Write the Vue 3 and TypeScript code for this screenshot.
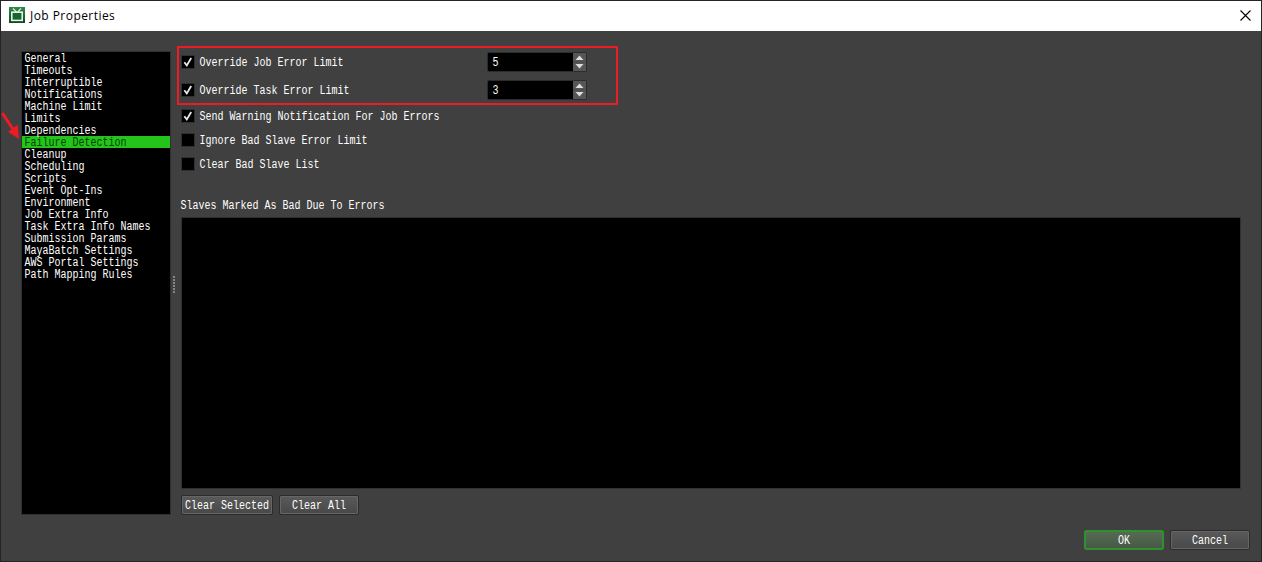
<script setup lang="ts">
import { ref } from 'vue'

const sections: string[] = [
  'General', 'Timeouts', 'Interruptible', 'Notifications', 'Machine Limit', 'Limits',
  'Dependencies', 'Failure Detection', 'Cleanup', 'Scheduling', 'Scripts', 'Event Opt-Ins',
  'Environment', 'Job Extra Info', 'Task Extra Info Names', 'Submission Params',
  'MayaBatch Settings', 'AWS Portal Settings', 'Path Mapping Rules',
]
const selected = ref('Failure Detection')

interface Limit { label: string; on: boolean; value: number }
const limits = ref<Limit[]>([
  { label: 'Override Job Error Limit', on: true, value: 5 },
  { label: 'Override Task Error Limit', on: true, value: 3 },
])
const options = ref([
  { label: 'Send Warning Notification For Job Errors', on: true },
  { label: 'Ignore Bad Slave Error Limit', on: false },
  { label: 'Clear Bad Slave List', on: false },
])
</script>

<template>
  <div class="window">
    <header class="titlebar">
      <svg class="logo" width="16" height="16" viewBox="0 0 16 16">
        <defs>
          <linearGradient id="tv" x1="0" y1="0" x2="0" y2="1">
            <stop offset="0" stop-color="#2f8a46" /><stop offset="1" stop-color="#0a4a20" />
          </linearGradient>
        </defs>
        <rect width="16" height="16" fill="url(#tv)" />
        <path d="M4 1.5 L7.5 5 M12 1.5 L8.5 5" stroke="#dcebdd" stroke-width="1.2" fill="none" />
        <rect x="2.8" y="5.2" width="10.4" height="8.2" fill="#17652f" stroke="#f2f8f2" stroke-width="1.5" />
      </svg>
      <span class="title">Job Properties</span>
      <svg class="close" width="11" height="11" viewBox="0 0 11 11">
        <path d="M0.5 0.5 L10.5 10.5 M10.5 0.5 L0.5 10.5" stroke="#000" stroke-width="1.1" />
      </svg>
    </header>

    <main class="body">
      <ul class="sections">
        <li v-for="s in sections" :key="s" :class="{ active: s === selected }" @click="selected = s">
          <span class="t">{{ s }}</span>
        </li>
      </ul>
      <div class="splitter"><i v-for="n in 6" :key="n" /></div>
      <section class="panel">
        <div v-for="l in limits" :key="l.label" class="limit">
          <span class="check" @click="l.on = !l.on">
            <svg v-if="l.on" width="12" height="12" viewBox="0 0 12 12"><path d="M2.3 6.2 L4.8 9.4 L9.2 2" /></svg>
          </span>
          <span class="t name">{{ l.label }}</span>
          <div class="spin">
            <span class="value"><span class="t">{{ l.value }}</span></span>
            <span class="steps">
              <svg width="13" height="18" viewBox="0 0 13 18">
                <path d="M2.5 7 L6.5 2.5 L10.5 7 Z M2.5 11 L6.5 15.5 L10.5 11 Z" fill="#dcdcdc" />
                <path d="M0 9 H13" stroke="#484848" />
              </svg>
            </span>
          </div>
        </div>
        <div v-for="o in options" :key="o.label" class="option">
          <span class="check" @click="o.on = !o.on">
            <svg v-if="o.on" width="12" height="12" viewBox="0 0 12 12"><path d="M2.3 6.2 L4.8 9.4 L9.2 2" /></svg>
          </span>
          <span class="t">{{ o.label }}</span>
        </div>
        <div class="caption"><span class="t">Slaves Marked As Bad Due To Errors</span></div>
        <div class="slaves" />
        <div class="actions">
          <button class="wide"><span class="t">Clear Selected</span></button>
          <button><span class="t">Clear All</span></button>
        </div>
      </section>
    </main>

    <footer class="footer">
      <button class="ok"><span class="t">OK</span></button>
      <button><span class="t">Cancel</span></button>
    </footer>

    <div class="highlight" />
    <svg class="arrow" width="22" height="30" viewBox="0 0 22 30">
      <path d="M1 2.8 L3.6 1.2 L13.8 16.6 L17.8 14 L19 28 L8 20.8 L11.4 18.6 Z" fill="#ed1c24" />
    </svg>
  </div>
</template>

<style>
body { margin: 0; background: #404040; }
</style>

<style scoped>
.window {
  position: relative; box-sizing: border-box; width: 1262px; height: 562px;
  display: flex; flex-direction: column; overflow: hidden;
  border: 1px solid #262427; background: #404040; color: #fff;
  font-family: "Liberation Mono", monospace; font-size: 10px;
}
.t {
  display: block; font-size: 10px; line-height: 12px; white-space: pre;
  transform: translate(0.5px, 2px) scaleY(1.2); transform-origin: 0 9px;
}
.titlebar {
  flex: none; height: 30px; display: flex; align-items: center; background: #fff; color: #000;
  padding: 0 10px 0 8px; box-sizing: border-box;
}
.logo { margin-top: -2px; }
.title { margin-left: 5px; font: 12px/16px "Open Sans", sans-serif; letter-spacing: 0.45px; }
.close { margin-left: auto; margin-top: -1px; }
.body { flex: none; box-sizing: border-box; height: 485px; display: flex; padding: 20px 20px 0; }
.sections {
  box-sizing: border-box; width: 150px; height: 464px; margin: 0; padding: 0; list-style: none;
  border: 1px solid #303030; background: #000;
}
.sections li { height: 12px; padding-left: 2px; }
.sections li.active { background: #24c51b; color: #063f04; }
.splitter {
  width: 10px; padding: 225px 5px 0 0; box-sizing: border-box;
  display: flex; flex-direction: column; align-items: center; gap: 1px;
}
.splitter i { width: 2px; height: 2px; background: #858585; }
.panel { width: 1060px; padding-top: 1px; display: flex; flex-direction: column; }
.limit { flex: none; height: 20px; margin-bottom: 8px; display: flex; align-items: center; }
.limit + .option { margin-top: -4px; }
.check {
  flex: none; box-sizing: border-box; width: 14px; height: 14px; margin-right: 4px;
  border: 1px solid #303030; background: #000;
}
.check svg { display: block; }
.check path { fill: none; stroke: #e8e8e8; stroke-width: 1.8; }
.name { width: 288px; }
.spin {
  box-sizing: border-box; width: 100px; height: 20px; display: flex;
  border: 1px solid #2c2c2c; border-radius: 2px; background: #000;
}
.value { width: 85px; padding: 3px 0 0 4px; box-sizing: border-box; }
.steps { width: 13px; background: #565656; }
.steps svg { display: block; }
.option { flex: none; height: 24px; display: flex; align-items: center; }
.caption { flex: none; height: 41px; box-sizing: border-box; padding-top: 23px; }
.caption .t { margin-left: -1px; }
.slaves { flex: none; box-sizing: border-box; height: 272px; border: 1px solid #303030; background: #000; }
.actions { display: flex; gap: 6px; padding-top: 6px; }
button {
  box-sizing: border-box; width: 80px; height: 20px; padding: 0; display: flex;
  align-items: center; justify-content: center; border: 1px solid #2b2b2b; border-radius: 2px;
  background: linear-gradient(#5a5a5a, #484848); box-shadow: inset 0 0 0 1px #666;
  color: #fff; font-family: inherit;
}
button .t { margin-left: -1px; }
button.wide { width: 92px; }
button.ok { border-color: #18a018; background: linear-gradient(#566b54, #465844); box-shadow: inset 0 0 0 1px #48804a; }
.footer { display: flex; justify-content: flex-end; gap: 6px; padding: 14px 11px 0 0; }
.highlight {
  position: absolute; left: 176px; top: 45px; box-sizing: border-box;
  width: 441px; height: 59px; border: 2px solid #ed1c24; pointer-events: none;
}
.arrow { position: absolute; left: -1px; top: 110px; pointer-events: none; }
</style>
